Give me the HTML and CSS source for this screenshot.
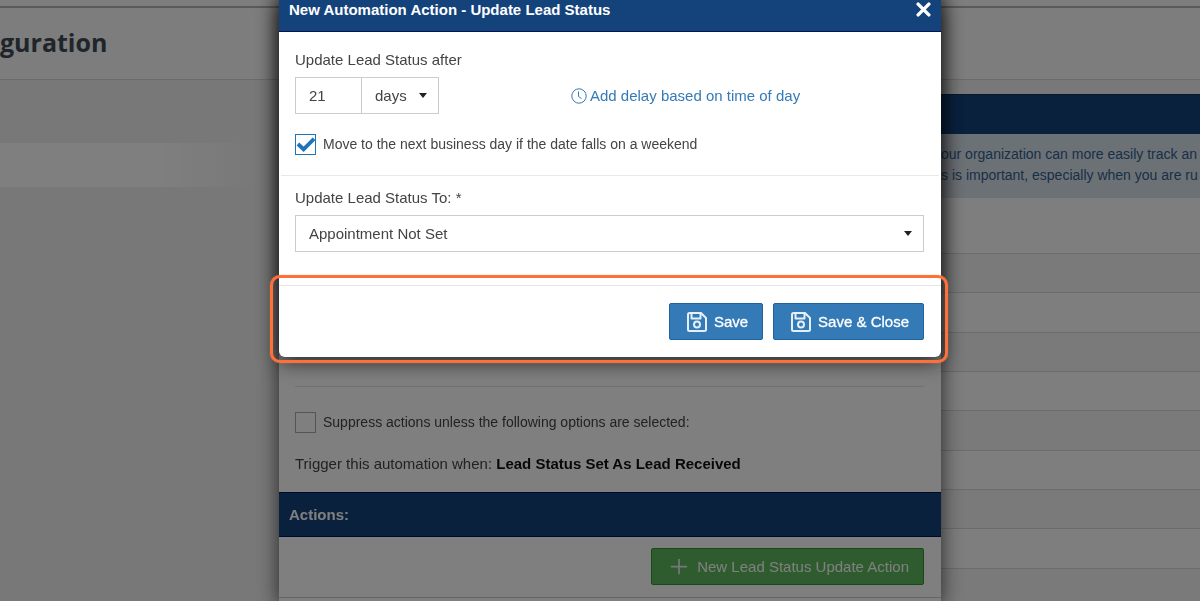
FILE: index.html
```html
<!DOCTYPE html>
<html lang="en">
<head>
<meta charset="utf-8">
<title>Automation Configuration</title>
<link rel="stylesheet" href="styles.css">
</head>
<body>
<svg class="sprite" aria-hidden="true">
  <symbol id="save" viewBox="0 0 20 20">
    <path d="M2.500 1h11.500L19 6v11.500a1.500 1.500 0 0 1-1.500 1.500h-15A1.500 1.500 0 0 1 1 17.500v-15A1.500 1.500 0 0 1 2.500 1z M4.500 1v5.500h9V1" fill="none" stroke="currentColor" stroke-width="2" stroke-linejoin="round"/>
    <circle cx="10" cy="12.500" r="3" fill="none" stroke="currentColor" stroke-width="2"/>
  </symbol>
</svg>

<div class="page">
  <div class="topbar"></div>
  <header class="page-head"><h1>guration</h1></header>
  <div class="columns">
    <nav class="side"><div class="side-active"></div></nav>
    <main class="panel">
      <div class="panel-head"></div>
      <p class="panel-info">our organization can more easily track an<br>s is important, especially when you are ru</p>
      <div class="rows">
        <div class="row row-tall"></div>
        <div class="row"></div><div class="row"></div><div class="row"></div><div class="row"></div>
        <div class="row"></div><div class="row"></div><div class="row"></div><div class="row"></div><div class="row"></div>
      </div>
    </main>
  </div>
</div>

<div class="layer layer-back">
  <section class="dialog dialog-back">
    <div class="back-body">
      <label class="check"><span class="box"><input type="checkbox"></span>Suppress actions unless the following options are selected:</label>
      <p class="trigger">Trigger this automation when: <strong>Lead Status Set As Lead Received</strong></p>
    </div>
    <h2 class="bar">Actions:</h2>
    <div class="back-actions">
      <button class="btn btn-green" type="button">
        <svg class="icon" viewBox="0 0 20 20" aria-hidden="true"><path d="M10 1v17M1 9.500h18" stroke="currentColor" stroke-width="2" fill="none"/></svg>New Lead Status Update Action</button>
    </div>
  </section>
</div>

<div class="layer layer-shade"></div>

<div class="layer layer-front">
  <section class="dialog dialog-front" role="dialog" aria-labelledby="title">
    <div class="bar">
      <h2 id="title">New Automation Action - Update Lead Status</h2>
      <button class="close" type="button" aria-label="Close">
        <svg viewBox="0 0 14 14" aria-hidden="true"><path d="M2 2l10 10M12 2L2 12" stroke="currentColor" stroke-width="3.200" stroke-linecap="round"/></svg>
      </button>
    </div>
    <div class="section">
      <label class="label" for="amount">Update Lead Status after</label>
      <div class="delay">
        <div class="group">
          <input class="field amount" id="amount" type="text" value="21">
          <span class="select"><select class="field unit" aria-label="Unit"><option>days</option></select></span>
        </div>
        <a class="link" href="#"><svg class="clock" viewBox="0 0 16 16" aria-hidden="true"><circle cx="8" cy="8" r="7.200"/><path d="M7.500 3.500v5l3 2"/></svg>Add delay based on time of day</a>
      </div>
      <label class="check"><span class="box box-on"><input type="checkbox" checked><svg viewBox="0 0 20 20" aria-hidden="true"><path d="M2 9.500l6 5.500L19 4" fill="none" stroke="currentColor" stroke-width="4"/></svg></span>Move to the next business day if the date falls on a weekend</label>
    </div>
    <div class="section section-status">
      <label class="label" for="status">Update Lead Status To: *</label>
      <span class="select select-wide"><select class="field" id="status"><option>Appointment Not Set</option></select></span>
    </div>
    <footer class="foot">
      <button class="btn" type="button"><svg class="icon" aria-hidden="true"><use href="#save"/></svg>Save</button>
      <button class="btn" type="button"><svg class="icon" aria-hidden="true"><use href="#save"/></svg>Save &amp; Close</button>
    </footer>
  </section>
</div>
</body>
</html>
```
FILE: styles.css
```css
* { box-sizing: border-box; }

body {
  margin: 0;
  height: 100vh;
  overflow: hidden;
  background: #f1f1f1;
  color: #444;
  font: 15px/20px "Liberation Sans", Arial, sans-serif;
}

h1, h2, p { margin: 0; }
.sprite { display: none; }

/* Page behind the dialogs */
.page { display: flex; flex-direction: column; height: 100vh; }
.topbar { height: 8px; background: #fdfdfd; border-bottom: 2px solid #b4b4b4; }
.page-head { height: 72px; padding-top: 16px; background: #fbfbfb; border-bottom: 1px solid #d6d6da; }
.page-head h1 { color: #3f4a54; font: 700 25px/36px "Open Sans", sans-serif; }
.columns { flex: 1; display: grid; grid-template-columns: 941px 1fr; min-height: 0; }
.side { padding-top: 63px; }
.side-active { width: 279px; height: 44px; background: linear-gradient(90deg, #fff 55%, #f1f1f1 92%); }
.panel { margin-top: 14px; overflow: hidden; }
.panel-head { height: 40px; background: #14437c; border-top: 1px solid #0c2f60; }
.panel-info { height: 64px; padding: 10px 0; background: #d9e2ec; color: #31618f; font-size: 14px; line-height: 21px; white-space: nowrap; }
.row { height: 39px; border-bottom: 1px solid #d8d8d8; background: #fdfdfd; }
.row:nth-child(even) { background: #f5f5f5; }
.row:nth-child(3n) { height: 40px; }
.row-tall { height: 56px; }

/* Stacked layers */
.layer { position: fixed; inset: 0; display: flex; justify-content: center; align-items: flex-start; padding-left: 20px; }
.layer-shade { background: rgba(0, 0, 0, .5); }
.dialog { width: 662px; max-width: 100%; background: #fff; box-shadow: 0 5px 20px rgba(0, 0, 0, .7); }
.dialog-back { height: 100%; }
.dialog-front { margin-top: -13px; border-radius: 0 0 6px 6px; }

.bar { display: flex; align-items: center; justify-content: space-between; height: 45px; padding: 0 10px; background: #14437c; border-top: 1px solid #00125a; border-bottom: 1px solid #00125a; color: #fff; font-size: 15px; font-weight: bold; line-height: 20px; }
.bar h2 { font-size: inherit; }
.close { width: 15px; height: 15px; padding: 0; border: 0; background: none; color: #fff; }
.close svg { display: block; }

.section { padding: 18px 17px 20px 16px; }
.section-status { margin: 0 2px; padding: 12px 15px 33px 14px; border-top: 1px solid #e8e8e8; }
.label { display: block; margin-bottom: 7px; }
.delay { display: grid; grid-template-columns: 276px 1fr; align-items: center; margin-bottom: 20px; }
.group { display: flex; }
.field { width: 100%; height: 37px; margin: 0; padding: 0 13px; border: 1px solid #ccc; border-radius: 0; background: #fff; color: #444; font: inherit; appearance: none; }
.amount { width: 67px; }
.select { position: relative; display: block; }
.select::after { content: ""; position: absolute; right: 12px; top: 16px; border: 4px solid transparent; border-top: 5px solid #222; border-bottom: 0; pointer-events: none; }
.unit { width: 77px; border-left: 0; }
.link { display: flex; align-items: center; gap: 3px; color: #337ab7; text-decoration: none; }
.clock { width: 16px; height: 16px; fill: none; stroke: currentColor; stroke-width: 1; }

.check { display: flex; align-items: center; gap: 7px; font-size: 14px; line-height: 21px; }
.box { position: relative; width: 21px; height: 21px; color: #1f73b7; }
.box input { display: block; width: 21px; height: 21px; margin: 0; border: 1px solid #aaa; background: #fff; appearance: none; }
.box-on input { border-color: #1f73b7; }
.box svg { position: absolute; inset: 1px; pointer-events: none; }

.foot { position: relative; display: flex; justify-content: flex-end; gap: 10px; padding: 17px; border-top: 1px solid #e5e5e5; }
.foot::after { content: ""; position: absolute; inset: -11px -7px -6px -9px; border: 3px solid #ff7038; border-radius: 10px; box-shadow: 0 0 1px #ff9b70; pointer-events: none; }
.btn { display: flex; align-items: center; gap: 7px; height: 37px; padding: 0 14px 0 17px; border: 1px solid #1e62a0; border-radius: 2px; background: #337ab7; color: #fff; font: inherit; -webkit-text-stroke: 0.3px; }
.icon { width: 20px; height: 20px; color: #e6eff7; }
.btn-green { padding-left: 18px; background: #5cb85c; border-color: #2f942f; -webkit-text-stroke: 0; }
.btn-green .icon { width: 18px; height: 18px; margin-right: 2px; }

/* Back dialog content */
.back-body { margin: 0 17px 0 16px; padding-top: 386px; }
.back-body .check { padding-top: 25px; border-top: 1px solid #e2e2e2; }
.back-body .box input { background: none; }
.trigger { padding: 21px 0 18px; }
.trigger strong { color: #111; }
.back-actions { display: flex; justify-content: flex-end; padding: 11px 17px 12px; border-bottom: 1px solid #ccc; }
```
